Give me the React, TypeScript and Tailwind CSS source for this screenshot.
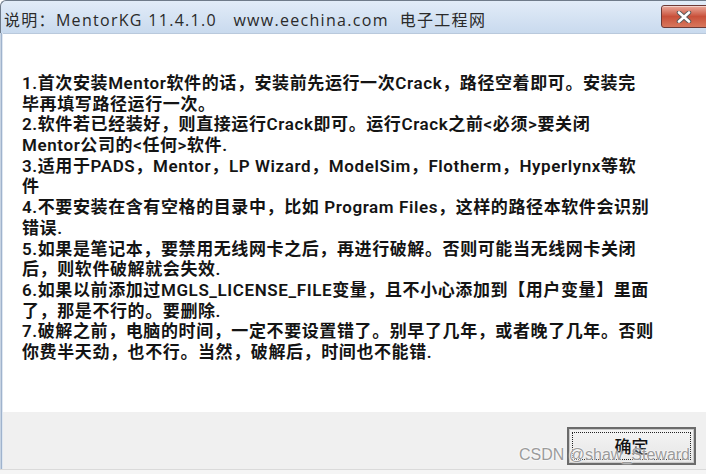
import React from "react";

const lines = [
  "1.首次安装Mentor软件的话，安装前先运行一次Crack，路径空着即可。安装完",
  "毕再填写路径运行一次。",
  "2.软件若已经装好，则直接运行Crack即可。运行Crack之前<必须>要关闭",
  "Mentor公司的<任何>软件.",
  "3.适用于PADS，Mentor，LP Wizard，ModelSim，Flotherm，Hyperlynx等软",
  "件",
  "4.不要安装在含有空格的目录中，比如 Program Files，这样的路径本软件会识别",
  "错误.",
  "5.如果是笔记本，要禁用无线网卡之后，再进行破解。否则可能当无线网卡关闭",
  "后，则软件破解就会失效.",
  "6.如果以前添加过MGLS_LICENSE_FILE变量，且不小心添加到【用户变量】里面",
  "了，那是不行的。要删除.",
  "7.破解之前，电脑的时间，一定不要设置错了。别早了几年，或者晚了几年。否则",
  "你费半天劲，也不行。当然，破解后，时间也不能错.",
];

const CloseButton = () => (
  <div className="w-[52px] h-[23px] mt-[4px] -mr-[7px] shrink-0 rounded-[3px] border border-[#6d3a36] bg-gradient-to-b from-[#e9a99c] via-[#c8503a] to-[#d8765c] flex items-center justify-center pr-[6px] shadow-[inset_0_1px_0_rgba(255,255,255,0.5)]">
    <svg width="16" height="12" viewBox="0 0 16 12">
      <path
        d="M3 1.5 L13 10.5 M13 1.5 L3 10.5"
        stroke="#5a5a5a"
        strokeWidth="4.5"
        strokeLinecap="round"
      />
      <path
        d="M3 1.5 L13 10.5 M13 1.5 L3 10.5"
        stroke="#ffffff"
        strokeWidth="2.6"
        strokeLinecap="round"
      />
    </svg>
  </div>
);

export default function App() {
  return (
    <div className="w-[706px] h-[474px] bg-white overflow-hidden flex flex-col font-['Open_Sans','Noto_Sans_CJK_SC',sans-serif]">
      {/* title bar */}
      <header className="h-[33px] shrink-0 flex items-start justify-between rounded-tl-[6px] border-t border-l border-[#6f7b8a] bg-gradient-to-b from-[#e2ecf8] to-[#c9daee]">
        <h1 className="pl-[3px] pt-[9px] text-[16px] leading-[20px] text-[#2a2a2a] whitespace-pre tracking-[1.3px]">
          说明：MentorKG 11.4.1.0{"   "}www.eechina.com{"  "}电子工程网
        </h1>
        <CloseButton />
      </header>

      <div className="flex flex-1 min-h-0">
        <div className="w-[3px] shrink-0 flex">
          <div className="w-px bg-[#c7d3e2]" />
          <div className="w-px bg-[#9fb3cd]" />
          <div className="w-px bg-[#dfe7f1]" />
        </div>
        <div className="flex-1 flex flex-col">
          {/* message */}
          <section className="flex-1 bg-white border-t border-[#b9c9dc] pt-[39px] pl-[19px]">
            <div className="font-['Roboto','Noto_Sans_CJK_SC',sans-serif] text-[17px] leading-[20.7px] tracking-[0.6px] font-semibold text-[#141414]">
              {lines.map((l, i) => (
                <div key={i} className="whitespace-pre h-[20.7px]">
                  {l}
                </div>
              ))}
            </div>
          </section>

          {/* button row */}
          <footer className="h-[57px] shrink-0 bg-[#f0f0f0] flex items-start justify-end pr-[10px] pt-[15px] relative">
            <button className="w-[129px] h-[38px] border-2 border-[#6b6b6b] bg-gradient-to-b from-[#f4f4f4] to-[#e6e6e6] p-[3px] shadow-[inset_0_0_0_1px_#c9c9c9]">
              <div className="w-full h-full border border-dotted border-[#222] flex items-center justify-center text-[17px] font-medium text-[#111] font-['Noto_Sans_CJK_SC',sans-serif]">
                确定
              </div>
            </button>
            <span className="absolute right-[16px] bottom-[5px] text-[16px] leading-[18px] text-[#9b9b9b] font-['Liberation_Sans',sans-serif] [text-shadow:0_0_2px_#fff,0_0_2px_#fff]">
              CSDN @shaw_Steward
            </span>
          </footer>
        </div>
      </div>
      <div className="h-[5px] shrink-0 border-t border-[#dadada] bg-[#f5f5f5]" />
    </div>
  );
}
